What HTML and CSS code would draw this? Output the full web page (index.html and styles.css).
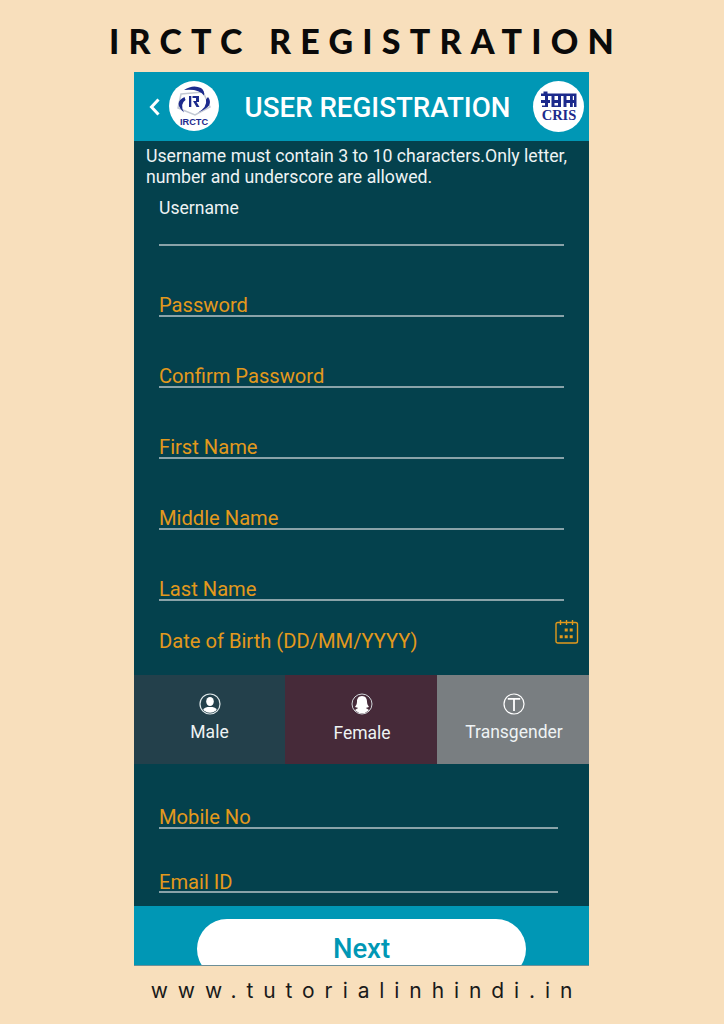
FILE: index.html
```html
<!DOCTYPE html>
<html lang="en">
<head>
<meta charset="utf-8">
<title>IRCTC Registration</title>
<link rel="stylesheet" href="styles.css">
</head>
<body>
<div class="poster">
  <h1 class="poster-title">IRCTC REGISTRATION</h1>
  <main class="phone">
    <header class="appbar">
      <svg class="back" viewBox="0 0 12 20"><path d="M9.500 2.500 2.500 10l7 7.500" fill="none" stroke="#fff" stroke-width="3"/></svg>
      <div class="logo logo-irctc">
        <svg viewBox="0 0 50 50" width="50" height="50">
          <path d="M12 13 34 11 41 26 26 34 9 27Z" fill="none" stroke="#c3c9d3" stroke-width="1.500"/>
          <path d="M15 9Q24 3 32 7Q36 10 35 14.500Q30 7.500 15 9Z" fill="#1c2a8c"/>
          <path d="M15.500 16Q4 21.500 15 31.500Q10.500 23 16.500 19Z" fill="#1c2a8c"/>
          <path d="M39 16Q46 25 29 31.500Q38.500 26 37 18.500Z" fill="#1c2a8c"/>
          <path d="M19 14.500h11.500v12.500H19z" fill="#fff"/>
          <path d="M20 15h2.300v11H20zM23.500 15h6.500v6h-2.500l3 5h-3l-3.500-6h3v-3h-3.500z" fill="#1c2a8c"/>
          <text x="25" y="43.500" class="irctc-text">IRCTC</text>
        </svg>
      </div>
      <h2 class="appbar-title">USER REGISTRATION</h2>
      <div class="logo logo-cris">
        <svg viewBox="0 0 51 51" width="51" height="51">
          <path d="M8 12.500h35.500v2.500H8zM10.500 10.500h4v2h-4zM12 15h3v11h-3zM8 19h9v3H8zM9 24.500h4V26H9zM18.500 15h3v11h-3zM18.500 19h9v3h-9zM25 15h3v11h-3zM30.500 15h3v11h-3zM30.500 19h13v3h-13zM37 15h2.800v11H37zM41 15h2.500v11H41zM21 24.500h5V26h-5z" fill="#1c2a8c"/>
          <text x="26" y="39" class="cris-text">CRIS</text>
        </svg>
      </div>
    </header>
    <section class="form">
      <p class="hint">Username must contain 3 to 10 characters.Only letter, number and underscore are allowed.</p>
      <div class="fields">
        <div class="field field-first"><span class="float-label">Username</span></div>
        <div class="field"><span class="label">Password</span></div>
        <div class="field"><span class="label">Confirm Password</span></div>
        <div class="field"><span class="label">First Name</span></div>
        <div class="field"><span class="label">Middle Name</span></div>
        <div class="field"><span class="label">Last Name</span></div>
      </div>
      <div class="dob">
        <span class="label">Date of Birth (DD/MM/YYYY)</span>
        <svg class="calendar" viewBox="0 0 24 24"><rect x="1" y="2.500" width="21.500" height="20.500" rx="1.800" fill="none" stroke="#e3991c" stroke-width="1.400"/><path d="M5.500 0v5M11.500 0v5M17.500 0v5" stroke="#e3991c" stroke-width="1.400"/><path d="M9.700 8.500h3v3h-3zM14.700 8.500h3v3h-3zM4.700 15.200h3v3h-3zM9.700 15.200h3v3h-3zM14.700 15.200h3v3h-3z" fill="#e3991c"/></svg>
      </div>
      <div class="genders">
        <div class="gender gender-male">
          <svg viewBox="0 0 22 22"><defs><clipPath id="cm"><circle cx="11" cy="11" r="8.700"/></clipPath></defs><circle cx="11" cy="11" r="10" fill="none" stroke="#dfe8ea" stroke-width="1.200"/><g clip-path="url(#cm)" fill="#fff"><ellipse cx="11" cy="8.500" rx="3.800" ry="4.600"/><path d="M2 21q1-6 6.500-7h5q5.500 1 6.500 7z"/></g></svg>
          <span>Male</span>
        </div>
        <div class="gender gender-female">
          <svg viewBox="0 0 22 22"><defs><clipPath id="cf"><circle cx="11" cy="11" r="9.300"/></clipPath></defs><circle cx="11" cy="11" r="10" fill="none" stroke="#dfe8ea" stroke-width=".9"/><g clip-path="url(#cf)" fill="#fff"><path d="M11 3c3.700 0 5 3 5 5.500 0 2.500 1 4 2 5.500l-5 1.500h-4l-5-1.500c1-1.500 2-3 2-5.500C6 6 7.300 3 11 3z"/><path d="M2 22q1-6 6.500-7.500h5Q19 16 20 22z"/></g></svg>
          <span>Female</span>
        </div>
        <div class="gender gender-trans">
          <svg viewBox="0 0 22 22"><circle cx="11" cy="11" r="10" fill="none" stroke="#fff" stroke-width="1.200"/><path d="M4.800 5h12.400v1.700h-5.300V18h-1.800V6.700H4.800z" fill="#fff"/></svg>
          <span>Transgender</span>
        </div>
      </div>
      <div class="contact">
        <div class="field field-short field-mobile"><span class="label">Mobile No</span></div>
        <div class="field field-short field-email"><span class="label">Email ID</span></div>
      </div>
    </section>
    <footer class="actions">
      <button class="next" type="button">Next</button>
    </footer>
  </main>
  <p class="site">www.tutorialinhindi.in</p>
</div>
</body>
</html>
```
FILE: styles.css
```css
* { box-sizing: border-box; }
html, body { margin: 0; padding: 0; }
body { background: #f8dfbc; width: 724px; height: 1024px; overflow: hidden; }
.poster { display: flex; flex-direction: column; align-items: center; height: 1024px; }
.poster-title {
  margin: 0; height: 72px;
  font: 900 34px/82px Lato, sans-serif;
  letter-spacing: 9.200px; color: #0a0a0a; white-space: nowrap; padding-left: 8px;
}
.phone { width: 455px; height: 894px; align-self: flex-start; margin-left: 134px; display: flex; flex-direction: column; background: #04414d; overflow: hidden; }
.appbar { height: 69px; flex: none; background: #0097b5; display: flex; align-items: center; padding: 0 5px 0 15px; }
.back { width: 12px; height: 20px; flex: none; }
.logo { width: 50px; height: 50px; flex: none; border-radius: 50%; background: #fff; overflow: hidden; margin-top: -1px; }
.logo svg { display: block; }
.logo-irctc { margin-left: 8px; }
.logo-cris { width: 51px; height: 51px; }
.irctc-text { font: 700 9.200px "Liberation Sans", sans-serif; fill: #1c2a8c; text-anchor: middle; }
.cris-text { font: 700 14.500px "Liberation Serif", serif; fill: #1c2a8c; text-anchor: middle; }
.appbar-title { flex: 1; margin: 0; padding-top: 2px; padding-left: 3px; text-align: center; font: 500 27.700px Roboto, sans-serif; color: #fff; white-space: nowrap; }
.form { flex: 1; display: flex; flex-direction: column; min-height: 0; }
.hint { margin: 0; padding: 5px 12px 0; font: 400 17.700px/20.500px Roboto, sans-serif; color: #eef3f4; height: 47px; }
.fields { padding: 0 25px; display: flex; flex-direction: column; }
.field { height: 71px; border-bottom: 2px solid #8aa3a9; display: flex; align-items: flex-end; }
.field-first { height: 58px; align-items: flex-start; }
.float-label { font: 400 17.600px/20px Roboto, sans-serif; color: #eef3f4; margin-top: 10px; }
.label { font: 400 20.150px/24px Roboto, sans-serif; color: #e3991c; white-space: nowrap; }
.field .label { margin-bottom: -2px; }
.dob { height: 74px; padding: 17px 10px 0 25px; display: flex; justify-content: space-between; align-items: flex-start; }
.dob .label { margin-top: 11px; }
.calendar { width: 24px; height: 24px; margin-top: 2px; overflow: visible; }
.genders { display: grid; grid-template-columns: 151px 152px 152px; height: 89px; flex: none; }
.gender { display: flex; flex-direction: column; align-items: center; padding-top: 18px; font: 400 17.500px/20px Roboto, sans-serif; color: #eef3f4; }
.gender svg { width: 22px; height: 22px; display: block; margin-bottom: 7px; }
.gender-male { background: #23404b; }
.gender-female { background: #462a39; padding-left: 2px; }
.gender-female span { margin-top: 1px; }
.gender-trans { background: #797e81; padding-left: 2px; }
.contact { padding: 0 31px 0 25px; display: flex; flex-direction: column; }
.field-mobile { height: 65px; }
.field-email { height: 64px; }
.contact .field-email .label { margin-bottom: -3px; }
.actions { height: 60px; flex: none; background: #0097b5; display: flex; justify-content: center; overflow: hidden; padding-top: 13px; position: relative; }
.actions::after { content: ""; position: absolute; left: 0; right: 0; bottom: 0; height: 1px; background: #6d8f97; }
.next { width: 329px; height: 60px; flex: none; border: 0; border-radius: 30px; background: #fff; color: #0097b5; font: 500 27.500px/30px Roboto, sans-serif; padding: 0; }
.site { margin: 0; padding-left: 9px; font: 400 21px/50px Inter, sans-serif; letter-spacing: 9.900px; color: #1a1a1a; white-space: nowrap; }
```
